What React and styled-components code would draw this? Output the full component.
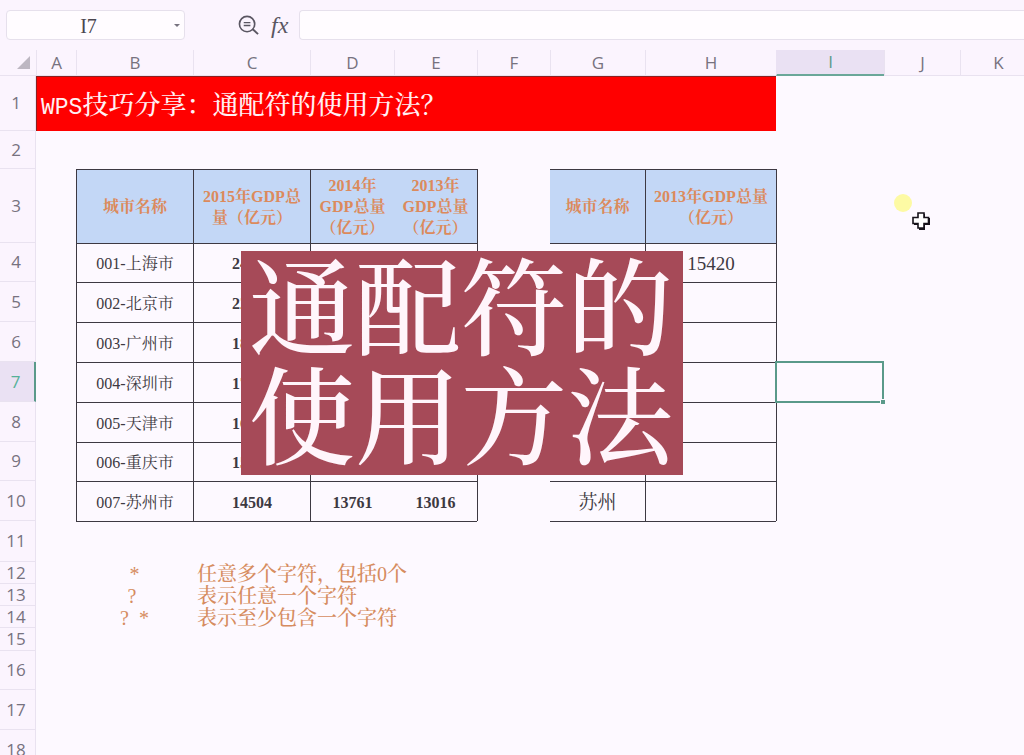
import React from "react";
import styled, { createGlobalStyle, css } from "styled-components";

const serif = `"Liberation Serif", "Noto Serif CJK SC", "Noto Sans CJK SC", serif`;
const ink = "#3d3942";
const green = "#5a9a8a";
const faint = "#e9e2f0";

const GlobalStyle = createGlobalStyle`
  * { box-sizing: border-box; }
  body { margin: 0; background: #fdf9ff; font-family: ${serif}; }
`;

const Page = styled.main`
  height: 100vh;
  overflow: hidden;
  background: #fdf9ff;
`;

const FormulaBar = styled.header`
  display: flex;
  align-items: center;
  height: 50px;
  padding-left: 6px;
  background: #fbf4fe;
`;

const NameBox = styled.div`
  display: flex;
  align-items: center;
  width: 179px;
  height: 30px;
  background: #fffcff;
  border: 1px solid #e6e0ec;
  border-radius: 4px;
`;

const NameInput = styled.input`
  flex: 1;
  min-width: 0;
  padding: 2px 0 0;
  border: 0;
  background: none;
  text-align: center;
  color: #4a464e;
  font: 20px ${serif};
`;

const PlainButton = styled.button`
  display: flex;
  align-items: center;
  justify-content: center;
  padding: 0;
  border: 0;
  background: none;
  color: #5a5662;
`;

const ArrowButton = styled(PlainButton)`
  width: 14px;
  height: 28px;
`;

const Tools = styled.div`
  display: flex;
  align-items: center;
  gap: 12px;
  margin-left: 53px;
  margin-right: 11px;
`;

const FxButton = styled(PlainButton)`
  font: italic 24px/28px ${serif};
`;

const FormulaInput = styled.input`
  flex: 1;
  min-width: 0;
  height: 30px;
  background: #fffcff;
  border: 1px solid #e6e0ec;
  border-right: 0;
  border-radius: 4px 0 0 4px;
  font: 18px ${serif};
`;

const Sheet = styled.section`
  position: relative;
  overflow: hidden;
`;

const Grid = styled.table`
  width: 100%;
  min-width: 1036px;
  table-layout: fixed;
  border-collapse: separate;
  border-spacing: 0;
`;

const Col = styled.col`
  width: ${(p) => (p.$w ? `${p.$w}px` : "auto")};
`;

const Row = styled.tr`
  height: ${(p) => p.$h}px;
`;

const header = css`
  padding: 0;
  background: #fbf4fe;
  color: #77727f;
  font: 17px/20px "Open Sans", "Noto Sans", sans-serif;
`;

const ColumnHeader = styled.th`
  ${header}
  border-left: 1px solid ${faint};
  border-bottom: 1px solid ${faint};
  ${(p) =>
    p.$active &&
    css`
      background: #eae1f3;
      color: ${green};
      border-left-color: #eae1f3;
      border-bottom: 2px solid #6aa799;
    `}
`;

const CornerHeader = styled.td`
  ${header}
  border-bottom: 1px solid ${faint};
  svg {
    display: block;
    margin-left: 17px;
  }
`;

const RowHeader = styled.th`
  ${header}
  padding-right: 3px;
  border-right: 1px solid ${faint};
  border-bottom: 1px solid ${faint};
  ${(p) =>
    p.$active &&
    css`
      background: #eae1f3;
      color: #55b198;
      border-right: 2px solid ${green};
    `}
`;

const Cell = styled.td`
  padding: 2px 0 0;
  text-align: center;
  color: ${ink};
  font-size: 16px;
  line-height: 20px;
  font-weight: ${(p) => (p.$bold ? 700 : 400)};
  border-left: ${(p) => (p.$left ? `1px solid ${ink}` : 0)};
  border-top: ${(p) => (p.$top ? `1px solid ${ink}` : 0)};
`;

const LargeCell = styled(Cell)`
  font-size: 19px;
`;

const TitleCell = styled.td`
  padding: 6px 4px 0;
  background: #ff0000;
  border-top: 1px solid #8c2020;
  border-left: 1px solid #8c2020;
  color: #fff0f4;
  font-size: 26px;
  font-weight: 500;
  line-height: 32px;
`;

const TitleLatin = styled.span`
  font-family: "Liberation Mono", monospace;
  font-size: 23px;
`;

const HeadCell = styled(Cell)`
  padding: 0;
  background: #c3d7f6;
  color: #dc8a5c;
  font-weight: 700;
  line-height: 21px;
`;

const NoteCell = styled.td`
  padding: 2px 0 0 4px;
  color: #d68c60;
  font-size: 20px;
  font-weight: 500;
  line-height: 20px;
  white-space: nowrap;
`;

const SymbolCell = styled(NoteCell)`
  padding: 2px 0 0;
  text-align: center;
`;

const SelectedCell = styled(Cell)`
  position: relative;
  &::after {
    content: "";
    position: absolute;
    inset: -1px 0 -1px -2px;
    border: 2px solid ${green};
  }
`;

const FillHandle = styled.span`
  position: absolute;
  z-index: 1;
  right: -1px;
  bottom: -2px;
  width: 5px;
  height: 5px;
  background: ${green};
  border-top: 1px solid #fdf9ff;
  border-left: 1px solid #fdf9ff;
`;

const Caption = styled.div`
  position: absolute;
  left: 241px;
  top: 201px;
  padding: 6px 10px 0 8px;
  background: #a64a58;
  color: #fff5fb;
  font-family: ${serif};
  font-weight: 500;
  font-size: 106px;
  line-height: 109px;
  white-space: nowrap;
`;

const Spotlight = styled.span`
  position: absolute;
  left: 894px;
  top: 144px;
  width: 18px;
  height: 18px;
  border-radius: 50%;
  background: #fdfaa4;
`;

const Pointer = styled.svg`
  position: absolute;
  left: 911px;
  top: 161px;
`;

const columns = [
  ["A", 40], ["B", 117], ["C", 117], ["D", 84], ["E", 83], ["F", 73],
  ["G", 95], ["H", 131], ["I", 108], ["J", 76], ["K", 0],
];

const cities = [
  { row: 4, h: 39, name: "001-上海市", y2015: "24965", result: "15420" },
  { row: 5, h: 40, name: "002-北京市", y2015: "22969" },
  { row: 6, h: 40, name: "003-广州市", y2015: "18100" },
  { row: 7, h: 40, name: "004-深圳市", y2015: "17503" },
  { row: 8, h: 40, name: "005-天津市", y2015: "16538" },
  { row: 9, h: 39, name: "006-重庆市", y2015: "15720" },
  { row: 10, h: 40, name: "007-苏州市", y2015: "14504", y2014: "13761", y2013: "13016", lookup: "苏州" },
];

const notes = [
  { row: 12, h: 22, symbol: "*", text: "任意多个字符，包括0个" },
  { row: 13, h: 22, symbol: "?\u00a0", text: "表示任意一个字符" },
  { row: 14, h: 22, symbol: "?\u00a0\u00a0*", text: "表示至少包含一个字符" },
];

const emptyRows = [[15, 23], [16, 39], [17, 40], [18, 40]];

function CityRow({ city }) {
  return (
    <Row $h={city.h}>
      <RowHeader scope="row" $active={city.row === 7}>{city.row}</RowHeader>
      <Cell />
      <Cell $left $top>{city.name}</Cell>
      <Cell $left $top $bold>{city.y2015}</Cell>
      <Cell $left $top $bold>{city.y2014}</Cell>
      <Cell $top $bold>{city.y2013}</Cell>
      <Cell $left />
      <LargeCell $top>{city.lookup}</LargeCell>
      <LargeCell $left $top>{city.result}</LargeCell>
      {city.row === 7 ? (
        <SelectedCell $left><FillHandle /></SelectedCell>
      ) : (
        <Cell $left />
      )}
      <Cell colSpan={2} />
    </Row>
  );
}

export default function App() {
  return (
    <Page>
      <GlobalStyle />
      <FormulaBar>
        <NameBox>
          <NameInput aria-label="名称框" defaultValue="I7" />
          <ArrowButton type="button" aria-label="展开名称列表">
            <svg width="6" height="3" viewBox="0 0 6 3"><path d="M0 0h6L3 3z" fill="#77727f" /></svg>
          </ArrowButton>
        </NameBox>
        <Tools>
          <PlainButton type="button" aria-label="查找">
            <svg width="21" height="21" viewBox="0 0 22 22" fill="none" stroke="currentColor" strokeWidth="1.7">
              <circle cx="9.5" cy="9.5" r="8" />
              <path d="M15.5 15l5.5 5" strokeWidth="2" />
              <path d="M6 8h7M6 11h7" strokeWidth="1.5" />
            </svg>
          </PlainButton>
          <FxButton type="button" aria-label="插入函数">fx</FxButton>
        </Tools>
        <FormulaInput aria-label="编辑栏" />
      </FormulaBar>

      <Sheet>
        <Grid>
          <colgroup>
            <Col $w={36} />
            {columns.map(([name, w]) => <Col key={name} $w={w} />)}
          </colgroup>
          <thead>
            <Row $h={26}>
              <CornerHeader>
                <svg width="13" height="13" viewBox="0 0 13 13"><path d="M13 0v13H0z" fill="#bdb7c2" /></svg>
              </CornerHeader>
              {columns.map(([name]) => (
                <ColumnHeader key={name} scope="col" $active={name === "I"}>{name}</ColumnHeader>
              ))}
            </Row>
          </thead>
          <tbody>
            <Row $h={55}>
              <RowHeader scope="row">1</RowHeader>
              <TitleCell colSpan={8}><TitleLatin>WPS</TitleLatin>技巧分享：通配符的使用方法？</TitleCell>
              <Cell colSpan={3} />
            </Row>
            <Row $h={38}>
              <RowHeader scope="row">2</RowHeader>
              <Cell colSpan={11} />
            </Row>
            <Row $h={74}>
              <RowHeader scope="row">3</RowHeader>
              <Cell />
              <HeadCell $left $top>城市名称</HeadCell>
              <HeadCell $left $top>2015年GDP总<br />量（亿元）</HeadCell>
              <HeadCell $left $top>2014年<br />GDP总量<br />（亿元）</HeadCell>
              <HeadCell $top>2013年<br />GDP总量<br />（亿元）</HeadCell>
              <Cell $left />
              <HeadCell $top>城市名称</HeadCell>
              <HeadCell $left $top>2013年GDP总量<br />（亿元）</HeadCell>
              <Cell $left />
              <Cell colSpan={2} />
            </Row>
            {cities.map((city) => <CityRow key={city.row} city={city} />)}
            <Row $h={41}>
              <RowHeader scope="row">11</RowHeader>
              <Cell />
              <Cell $top colSpan={4} />
              <Cell />
              <Cell $top colSpan={2} />
              <Cell colSpan={3} />
            </Row>
            {notes.map((note) => (
              <Row key={note.row} $h={note.h}>
                <RowHeader scope="row">{note.row}</RowHeader>
                <Cell />
                <SymbolCell>{note.symbol}</SymbolCell>
                <NoteCell colSpan={9}>{note.text}</NoteCell>
              </Row>
            ))}
            {emptyRows.map(([row, h]) => (
              <Row key={row} $h={h}>
                <RowHeader scope="row">{row}</RowHeader>
                <Cell colSpan={11} />
              </Row>
            ))}
          </tbody>
        </Grid>
        <Caption>通配符的<br />使用方法</Caption>
        <Spotlight />
        <Pointer width="20" height="20" viewBox="0 0 20 20">
          <path d="M8 3h6v4h5v7h-5v5H8v-5H3V7h5z" fill="#16121a" />
          <path d="M7 2h6v4.500h4.500v6H13V17H7v-4.500H2v-6h5z" fill="#fff" stroke="#16121a" strokeWidth="1.6" />
        </Pointer>
      </Sheet>
    </Page>
  );
}
